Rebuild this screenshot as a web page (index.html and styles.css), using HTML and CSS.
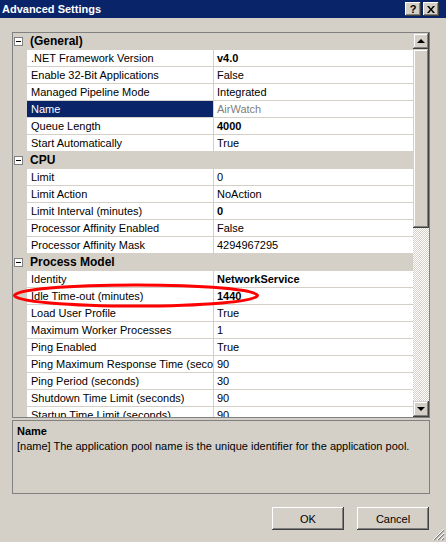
FILE: index.html
```html
<!DOCTYPE html>
<html>
<head>
<meta charset="utf-8">
<link rel="stylesheet" href="styles.css">
</head>
<body>
<div class="window">
  <div class="titlebar">
    <span class="title">Advanced Settings</span>
    <div class="caption-buttons">
      <div class="cap-btn help">?</div>
      <div class="cap-btn close">
        <svg width="8" height="7" viewBox="0 0 8 7"><path d="M0 0h2l2 2.5L6 0h2L5 3.5 8 7H6L4 4.5 2 7H0l3-3.5z" fill="#000"/></svg>
      </div>
    </div>
  </div>
  <div class="content">
    <div class="grid">
      <div class="rows">
        <div class="cat"><span class="exp"></span><span class="cat-label">(General)</span></div>
        <div class="row"><span class="margin"></span><span class="name">.NET Framework Version</span><span class="value bold">v4.0</span></div>
        <div class="row"><span class="margin"></span><span class="name">Enable 32-Bit Applications</span><span class="value">False</span></div>
        <div class="row"><span class="margin"></span><span class="name">Managed Pipeline Mode</span><span class="value">Integrated</span></div>
        <div class="row selected"><span class="margin"></span><span class="name">Name</span><span class="value readonly">AirWatch</span></div>
        <div class="row"><span class="margin"></span><span class="name">Queue Length</span><span class="value bold">4000</span></div>
        <div class="row"><span class="margin"></span><span class="name">Start Automatically</span><span class="value">True</span></div>
        <div class="cat"><span class="exp"></span><span class="cat-label">CPU</span></div>
        <div class="row"><span class="margin"></span><span class="name">Limit</span><span class="value">0</span></div>
        <div class="row"><span class="margin"></span><span class="name">Limit Action</span><span class="value">NoAction</span></div>
        <div class="row"><span class="margin"></span><span class="name">Limit Interval (minutes)</span><span class="value bold">0</span></div>
        <div class="row"><span class="margin"></span><span class="name">Processor Affinity Enabled</span><span class="value">False</span></div>
        <div class="row"><span class="margin"></span><span class="name">Processor Affinity Mask</span><span class="value">4294967295</span></div>
        <div class="cat"><span class="exp"></span><span class="cat-label">Process Model</span></div>
        <div class="row"><span class="margin"></span><span class="name">Identity</span><span class="value bold">NetworkService</span></div>
        <div class="row"><span class="margin"></span><span class="name">Idle Time-out (minutes)</span><span class="value bold">1440</span></div>
        <div class="row"><span class="margin"></span><span class="name">Load User Profile</span><span class="value">True</span></div>
        <div class="row"><span class="margin"></span><span class="name">Maximum Worker Processes</span><span class="value">1</span></div>
        <div class="row"><span class="margin"></span><span class="name">Ping Enabled</span><span class="value">True</span></div>
        <div class="row"><span class="margin"></span><span class="name">Ping Maximum Response Time (seconds)</span><span class="value">90</span></div>
        <div class="row"><span class="margin"></span><span class="name">Ping Period (seconds)</span><span class="value">30</span></div>
        <div class="row"><span class="margin"></span><span class="name">Shutdown Time Limit (seconds)</span><span class="value">90</span></div>
        <div class="row"><span class="margin"></span><span class="name">Startup Time Limit (seconds)</span><span class="value">90</span></div>
      </div>
      <div class="scrollbar">
        <div class="sb-btn"><span class="arrow up"></span></div>
        <div class="sb-thumb"></div>
        <div class="sb-track"></div>
        <div class="sb-btn"><span class="arrow down"></span></div>
      </div>
    </div>
    <div class="desc">
      <div class="desc-title">Name</div>
      <div class="desc-text">[name] The application pool name is the unique identifier for the application pool.</div>
    </div>
    <div class="actions">
      <div class="btn">OK</div>
      <div class="btn">Cancel</div>
    </div>
  </div>
  <svg class="grip" width="12" height="12" viewBox="0 0 12 12">
    <path d="M11 1L1 11M11 5L5 11M11 9L9 11" stroke="#808080" stroke-width="1.2"/>
    <path d="M11 0L0 11M11 4L4 11M11 8L8 11" stroke="#fff" stroke-width="1"/>
  </svg>
  <svg class="annotation" width="446" height="542" viewBox="0 0 446 542">
    <ellipse cx="136" cy="295.5" rx="121.5" ry="10.5" fill="none" stroke="#ff0000" stroke-width="3"/>
  </svg>
</div>
</body>
</html>
```
FILE: styles.css
```css
* { box-sizing: border-box; }
html, body { margin: 0; padding: 0; }
body {
  width: 446px;
  height: 542px;
  background: #d4d0c8;
  font-family: "Liberation Sans", Arial, sans-serif;
  font-size: 11px;
  color: #000;
  overflow: hidden;
}
.window {
  position: relative;
  width: 446px;
  height: 542px;
  display: flex;
  flex-direction: column;
}
.titlebar {
  height: 18px;
  background: #0a246a;
  display: flex;
  align-items: center;
  justify-content: space-between;
  padding: 0 7px 0 2px;
}
.title {
  color: #fff;
  font-weight: bold;
  font-size: 11px;
}
.caption-buttons {
  display: flex;
  gap: 2px;
  align-self: flex-start;
  margin-top: 2px;
}
.cap-btn {
  width: 16px;
  height: 14px;
  background: #d4d0c8;
  box-shadow: inset -1px -1px #404040, inset 1px 1px #fff, inset -2px -2px #808080;
  display: flex;
  align-items: center;
  justify-content: center;
  font-weight: bold;
  font-size: 11px;
  line-height: 14px;
}
.content {
  flex: 1;
  display: flex;
  flex-direction: column;
  padding: 14px 16px 0 12px;
}
.grid {
  height: 386px;
  border: 1px solid #808080;
  display: flex;
  background: #d4d0c8;
}
.rows {
  width: 400px;
  overflow: hidden;
}
.row, .cat {
  height: 17px;
  display: flex;
  border-bottom: 1px solid #d4d0c8;
  line-height: 16px;
  white-space: nowrap;
}
.cat {
  background: #d4d0c8;
  align-items: center;
}
.exp {
  width: 9px;
  height: 9px;
  margin-left: 1px;
  border: 1px solid #808080;
  background: #fff;
  position: relative;
}
.exp::after {
  content: "";
  position: absolute;
  left: 1px;
  top: 3px;
  width: 5px;
  height: 1px;
  background: #000;
}
.cat-label {
  font-weight: bold;
  font-size: 12px;
  margin-left: 7px;
}
.margin {
  width: 14px;
  flex: none;
}
.name {
  width: 187px;
  flex: none;
  background: #fff;
  border-right: 1px solid #d4d0c8;
  padding-left: 4px;
  overflow: hidden;
}
.value {
  flex: 1;
  background: #fff;
  padding-left: 3px;
  overflow: hidden;
}
.bold { font-weight: bold; }
.readonly { color: #808080; }
.selected .name {
  background: #0a246a;
  color: #fff;
}
.scrollbar {
  width: 16px;
  display: flex;
  flex-direction: column;
}
.sb-btn, .sb-thumb {
  background: #d4d0c8;
  box-shadow: inset -1px -1px #404040, inset 1px 1px #d4d0c8, inset -2px -2px #808080, inset 2px 2px #fff;
}
.sb-btn {
  height: 16px;
  display: flex;
  align-items: center;
  justify-content: center;
}
.sb-thumb { height: 179px; }
.sb-track {
  flex: 1;
  background: repeating-conic-gradient(#fff 0 25%, #d4d0c8 0 50%) 0 0 / 2px 2px;
}
.arrow {
  width: 0;
  height: 0;
  border-left: 4px solid transparent;
  border-right: 4px solid transparent;
}
.arrow.up { border-bottom: 4px solid #000; margin-top: -1px; }
.arrow.down { border-top: 4px solid #000; }
.desc {
  margin-top: 2px;
  height: 74px;
  border: 1px solid #808080;
  padding: 3px 4px;
  line-height: 15px;
}
.desc-title { font-weight: bold; }
.actions {
  display: flex;
  justify-content: flex-end;
  gap: 13px;
  margin-top: 13px;
  padding-right: 1px;
}
.btn {
  width: 72px;
  height: 23px;
  background: #d4d0c8;
  box-shadow: inset -1px -1px #404040, inset 1px 1px #fff, inset -2px -2px #808080;
  display: flex;
  align-items: center;
  justify-content: center;
}
.grip {
  position: absolute;
  right: 1px;
  bottom: 1px;
}
.annotation {
  position: absolute;
  left: 0;
  top: 0;
  pointer-events: none;
}
```
